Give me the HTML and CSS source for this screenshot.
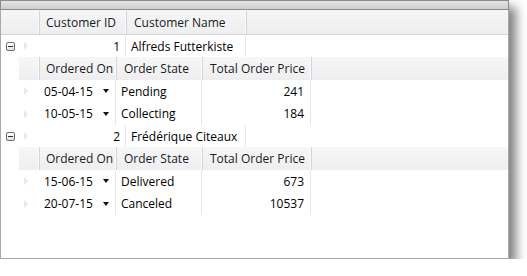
FILE: index.html
```html
<!DOCTYPE html>
<html lang="en">
<head>
    <meta charset="UTF-8">
    <title>Customers Grid</title>
    <link rel="stylesheet" href="styles.css">
</head>
<body>
    <div class="window">
        <div class="topbar"></div>
        <div class="head">
            <div class="cell c-lead"></div>
            <div class="cell c-id">Customer ID</div>
            <div class="cell c-name">Customer Name</div>
        </div>

        <div class="cust">
            <div class="expander"><span class="minus"></span></div>
            <div class="indicator"><span class="tri"></span></div>
            <div class="cell c-id num">1</div>
            <div class="cell c-name">Alfreds Futterkiste</div>
        </div>
        <div class="sub">
            <div class="sub-head">
                <div class="cell s-lead"></div>
                <div class="cell s-date">Ordered On</div>
                <div class="cell s-state">Order State</div>
                <div class="cell s-total">Total Order Price</div>
            </div>
            <div class="sub-row">
                <div class="indicator"><span class="tri"></span></div>
                <div class="cell s-date">05-04-15<span class="drop"></span></div>
                <div class="cell s-state">Pending</div>
                <div class="cell s-total num">241</div>
            </div>
            <div class="sub-row">
                <div class="indicator"><span class="tri"></span></div>
                <div class="cell s-date">10-05-15<span class="drop"></span></div>
                <div class="cell s-state">Collecting</div>
                <div class="cell s-total num">184</div>
            </div>
        </div>

        <div class="cust">
            <div class="expander"><span class="minus"></span></div>
            <div class="indicator"><span class="tri"></span></div>
            <div class="cell c-id num">2</div>
            <div class="cell c-name">Frédérique Citeaux</div>
        </div>
        <div class="sub">
            <div class="sub-head">
                <div class="cell s-lead"></div>
                <div class="cell s-date">Ordered On</div>
                <div class="cell s-state">Order State</div>
                <div class="cell s-total">Total Order Price</div>
            </div>
            <div class="sub-row">
                <div class="indicator"><span class="tri"></span></div>
                <div class="cell s-date">15-06-15<span class="drop"></span></div>
                <div class="cell s-state">Delivered</div>
                <div class="cell s-total num">673</div>
            </div>
            <div class="sub-row">
                <div class="indicator"><span class="tri"></span></div>
                <div class="cell s-date">20-07-15<span class="drop"></span></div>
                <div class="cell s-state">Canceled</div>
                <div class="cell s-total num">10537</div>
            </div>
        </div>
    </div>
</body>
</html>
```

FILE: styles.css
```css
body {
    margin: 0;
    background-color: white;
    font-family: "Open Sans", "Noto Sans", sans-serif;
    font-size: 12px;
    color: #000;
}
.window {
    width: 507px;
    height: 258px;
    border: 1px solid #a9a9a9;
    border-top: none;
    background-color: white;
    box-shadow: 7px 7px 10px rgba(0, 0, 0, 0.5);
}
.topbar {
    height: 8px;
    margin: 0 -1px;
    border: 1px solid #8c8c8c;
    background: linear-gradient(#e4e4e4, #cfcfcf);
}
.head, .cust, .sub-head, .sub-row {
    display: flex;
}
.cell {
    box-sizing: border-box;
    display: flex;
    align-items: center;
    white-space: nowrap;
    border-right: 1px solid #e6e6e6;
}
.num {
    justify-content: flex-end;
}
.head {
    height: 25px;
    padding-top: 1px;
    background: linear-gradient(#f6f6f7, #eeeef0);
    border-bottom: 1px solid #d6d6d6;
    box-sizing: border-box;
    color: #1b1b1b;
}
.head .cell, .sub-head .cell {
    border-right: 1px solid #d4d4d4;
    box-shadow: inset -1px 0 0 #fbfbfb;
}
.c-lead {
    width: 39px;
}
.c-id {
    width: 87px;
    padding: 0 5px 0 6px;
}
.head .c-name {
    padding-left: 7px;
}
.c-name {
    width: 120px;
    padding-left: 5px;
}
.cust {
    height: 22px;
}
.cust .cell {
    border-right-color: #e9e9e9;
}
.expander {
    width: 18px;
    display: flex;
    align-items: center;
    justify-content: center;
}
.minus {
    width: 7px;
    height: 7px;
    border: 1px solid #6e6e6e;
    border-radius: 2px;
    background: linear-gradient(#ffffff, #e2e2e2);
    position: relative;
}
.minus::after {
    content: "";
    position: absolute;
    left: 1px;
    top: 3px;
    width: 5px;
    height: 1px;
    background-color: #333;
}
.indicator {
    width: 20px;
    display: flex;
    align-items: center;
    padding-left: 5px;
    box-sizing: border-box;
}
.tri {
    width: 0;
    height: 0;
    border-top: 4px solid transparent;
    border-bottom: 4px solid transparent;
    border-left: 4px solid #e8e8e8;
}
.sub {
    margin-left: 18px;
}
.sub-head {
    height: 23px;
    background: linear-gradient(#f7f7f8, #eeeef0);
    color: #1b1b1b;
}
.s-lead {
    width: 21px;
}
.s-date {
    width: 77px;
    padding-left: 6px;
}
.sub-head .s-state, .sub-head .s-total {
    padding-left: 7px;
}
.s-state {
    width: 86px;
    padding-left: 5px;
}
.s-total {
    width: 109px;
    padding-right: 6px;
}
.sub-row {
    height: 22.5px;
}
.sub-row .s-date {
    width: 77px;
    padding-left: 5px;
    justify-content: space-between;
    padding-right: 6px;
}
.drop {
    width: 0;
    height: 0;
    border-left: 3.5px solid transparent;
    border-right: 3.5px solid transparent;
    border-top: 4px solid #111;
}
```
